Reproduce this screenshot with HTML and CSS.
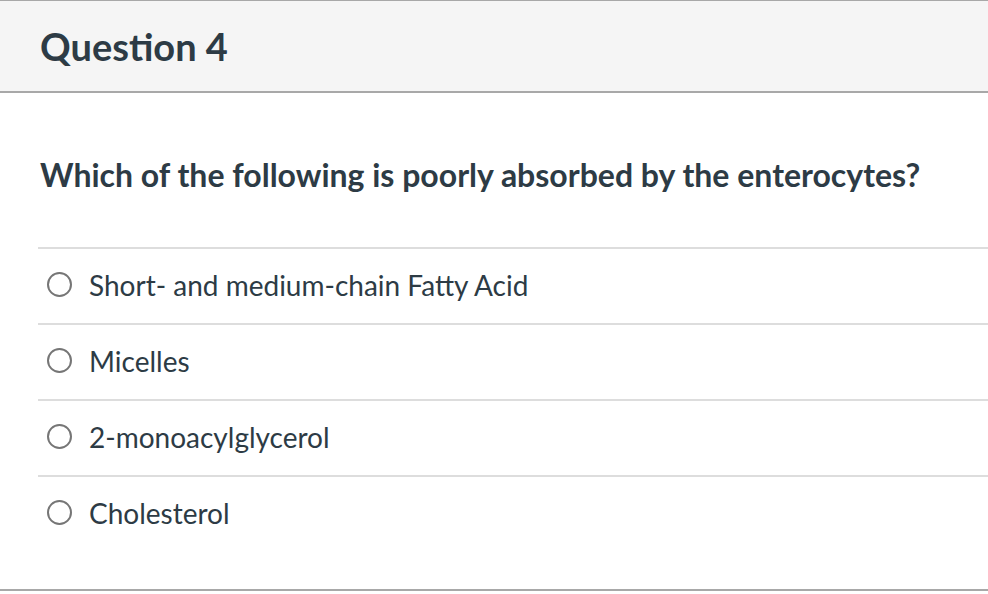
FILE: index.html
```html
<!DOCTYPE html>
<html lang="en">
<head>
<meta charset="utf-8">
<link rel="stylesheet" href="styles.css">
</head>
<body>
<div class="question">
  <div class="header"><h2 class="title">Question 4</h2></div>
  <div class="content">
    <p class="prompt">Which of the following is poorly absorbed by the enterocytes?</p>
    <div class="answers">
      <label class="answer"><span class="radio"></span><span class="label">Short- and medium-chain Fatty Acid</span></label>
      <label class="answer"><span class="radio"></span><span class="label">Micelles</span></label>
      <label class="answer"><span class="radio"></span><span class="label">2-monoacylglycerol</span></label>
      <label class="answer"><span class="radio"></span><span class="label">Cholesterol</span></label>
    </div>
  </div>
</div>
</body>
</html>
```

FILE: styles.css
```css
html, body {
  margin: 0;
  padding: 0;
  background: #ffffff;
}
body {
  font-family: Lato, "Open Sans", sans-serif;
  color: #2d3b45;
}
.question {
  border-top: 1px solid #a8a8a8;
  border-bottom: 2px solid #a8a8a8;
  width: 988px;
}
.header {
  height: 90px;
  background: #f5f5f5;
  border-bottom: 2px solid #a8a8a8;
  display: flex;
  align-items: center;
  padding-left: 40px;
}
.title {
  margin: 0;
  font-size: 38px;
  font-weight: 700;
  line-height: 40px;
}
.content {
  padding-left: 38px;
}
.prompt {
  margin: 0;
  padding: 62px 0 52px 2px;
  font-size: 32px;
  font-weight: 700;
  line-height: 40px;
}
.answers {
  padding-bottom: 38px;
}
.answer {
  display: flex;
  align-items: center;
  height: 71px;
  padding-bottom: 3px;
  border-top: 2px solid #dddddd;
  padding-left: 9px;
}
.radio {
  width: 21px;
  height: 21px;
  border: 2px solid #767676;
  border-radius: 50%;
  flex: none;
  margin-right: 17px;
}
.label {
  font-size: 28px;
  line-height: 32px;
}
```
